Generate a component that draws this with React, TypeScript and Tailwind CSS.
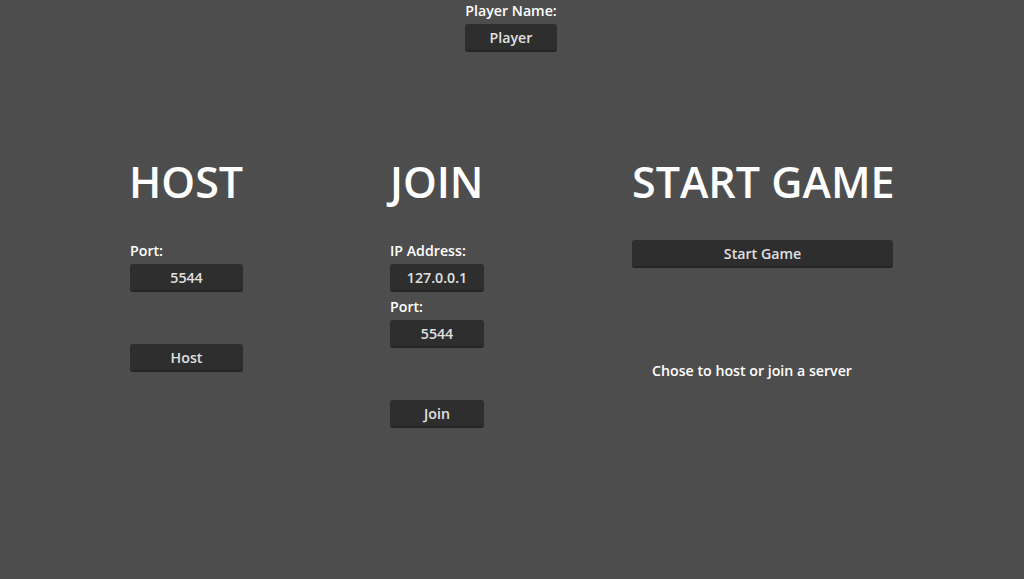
export default function App() {
  const box =
    "flex h-[28px] items-center justify-center rounded-[3px] border-b-2 border-[#252525] bg-[#2e2e2e] pt-[2px] text-[14.2px] leading-[20px] text-[#e0e0e0]"
  const label = "text-[14.2px] leading-[20px] text-white"
  const heading = "text-[43px] leading-[43px] text-white whitespace-nowrap"

  return (
    <div
      className="flex h-[579px] w-full flex-col bg-[#4d4d4d] font-semibold"
      style={{ fontFamily: '"Open Sans", "Noto Sans", sans-serif' }}
    >
      {/* nombre del jugador */}
      <div className="flex flex-col items-center">
        <div className={`${label} mt-[1px] ml-[-2px]`}>Player Name:</div>
        <div className={`${box} mt-[3px] ml-[-2px] w-[92px]`}>Player</div>
      </div>

      <div className="mt-[108px] flex pl-[130px]">
        {/* host */}
        <div className="flex w-[260px] flex-col">
          <h1 className={`${heading} -ml-[1px]`}>HOST</h1>
          <div className={`${label} mt-[38px]`}>Port:</div>
          <div className={`${box} mt-[3px] w-[113px]`}>5544</div>
          <div className={`${box} mt-[52px] w-[113px]`}>Host</div>
        </div>

        {/* join */}
        <div className="flex w-[242px] flex-col">
          <h1 className={heading}>JOIN</h1>
          <div className={`${label} mt-[38px]`}>IP Address:</div>
          <div className={`${box} mt-[3px] w-[94px]`}>127.0.0.1</div>
          <div className={`${label} mt-[5px]`}>Port:</div>
          <div className={`${box} mt-[3px] w-[94px]`}>5544</div>
          <div className={`${box} mt-[52px] w-[94px]`}>Join</div>
        </div>

        {/* iniciar partida */}
        <div className="flex w-[261px] flex-col">
          <h1 className={heading}>START GAME</h1>
          <div className={`${box} mt-[37px] w-[261px]`}>Start Game</div>
          <div className={`${label} mt-[93px] pl-[20px]`}>Chose to host or join a server</div>
        </div>
      </div>
    </div>
  )
}
